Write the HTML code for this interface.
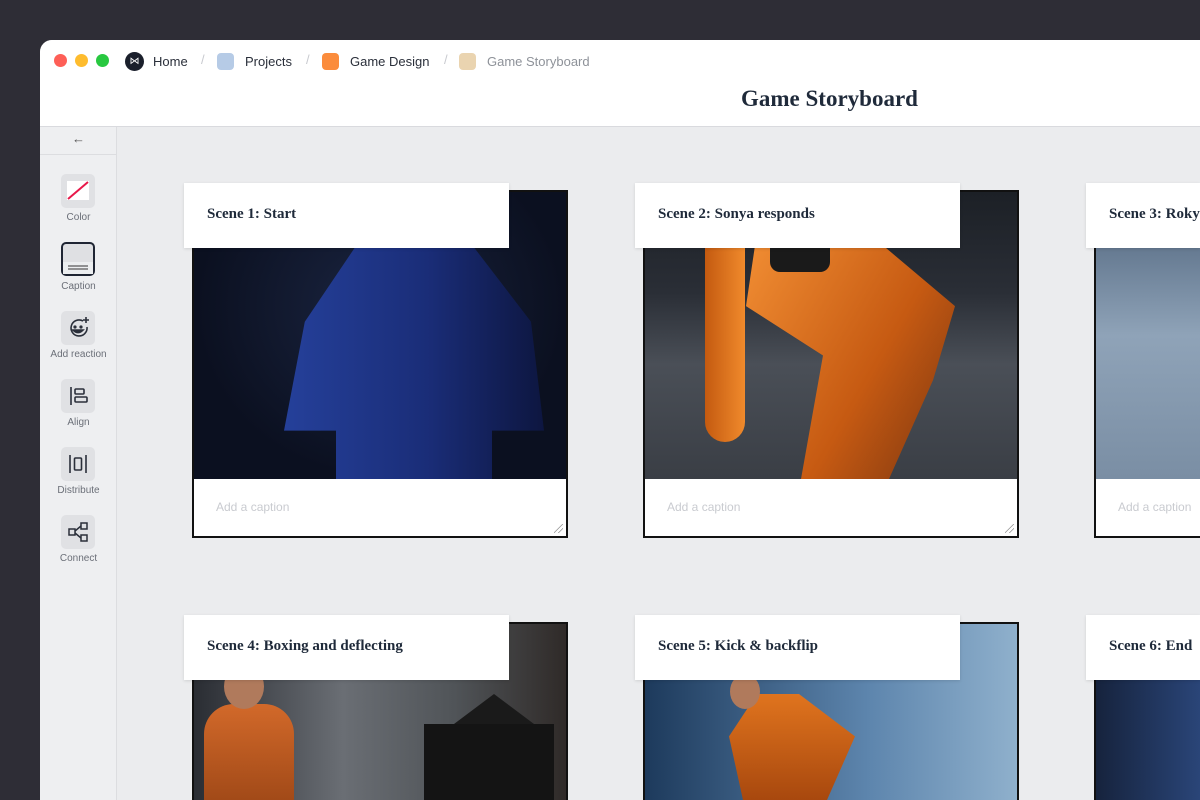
<!DOCTYPE html>
<html style="width:1200px;height:800px;overflow:hidden"><head><meta charset="utf-8"><style>
*{margin:0;padding:0;box-sizing:border-box}
body{width:1200px;height:800px;background:#2e2d36;overflow:hidden;font-family:"Liberation Sans",sans-serif}
#wrap{position:relative;width:1200px;height:800px;overflow:hidden}
.win{position:absolute;left:40px;top:40px;width:1160px;height:760px;background:#ebecee;border-top-left-radius:12px;overflow:hidden}
.hdr{position:absolute;left:0;top:0;right:0;height:87px;background:#fff;border-bottom:1px solid #d9dade}
.dot{position:absolute;top:14px;width:13px;height:13px;border-radius:50%}
.bc{position:absolute;top:12px;font-size:13px;color:#2a2f3a;display:flex;align-items:center;height:18px}
.sq{width:17px;height:17px;border-radius:4px;margin-right:11px;display:inline-block}
.sl{position:absolute;top:12px;color:#c8cacf;font-size:13px}
.title{position:absolute;top:46px;left:701px;font-family:"Liberation Serif",serif;font-weight:bold;font-size:23px;color:#1f2a3a}
.side{position:absolute;left:0;top:87px;width:77px;bottom:0;background:#eeeff1;border-right:1px solid #dcdde0}
.tool{position:absolute;left:21px;width:34px;height:34px;border-radius:5px;background:#e0e1e4}
.tl{position:absolute;width:77px;left:0;text-align:center;font-size:10px;color:#6b6f78}
.lab{position:absolute;width:325px;height:65px;background:#fff;box-shadow:0 1px 3px rgba(0,0,0,.12);font-family:"Liberation Serif",serif;font-weight:bold;font-size:15px;color:#1f2a3a;padding:23px 0 0 23px;z-index:2;white-space:nowrap;overflow:hidden}
.fr{position:absolute;width:376px;height:348px;border:2px solid #111;background:#fff;overflow:hidden}
.ph{position:absolute;left:0;top:0;right:0;height:287px;overflow:hidden}
.cap{position:absolute;left:22px;top:308px;font-size:12px;color:#c9cbd0}
.rs{position:absolute;right:3px;bottom:3px;width:9px;height:9px;background:linear-gradient(135deg,transparent 45%,#999 46%,#999 52%,transparent 53%,transparent 70%,#999 71%,#999 77%,transparent 78%)}
.r2{top:622px;height:178px;border-bottom:none}
.r2 .ph{height:176px}
.edge{width:106px}
.edgel{width:114px}
</style></head><body><div id="wrap">
<div class="win">
 <div class="hdr">
  <div class="dot" style="left:14px;background:#fe5f57"></div>
  <div class="dot" style="left:35px;background:#febc2e"></div>
  <div class="dot" style="left:56px;background:#28c840"></div>
  <div class="bc" style="left:85px"><span style="width:19px;height:19px;border-radius:50%;background:#1a1f2b;margin-right:9px;display:inline-block;color:#fff;font-size:10px;text-align:center;line-height:19px">⋈</span>Home</div>
  <div class="sl" style="left:161px">/</div>
  <div class="bc" style="left:177px"><span class="sq" style="background:#b6cbe6"></span>Projects</div>
  <div class="sl" style="left:266px">/</div>
  <div class="bc" style="left:282px"><span class="sq" style="background:#fb8c3c"></span>Game Design</div>
  <div class="sl" style="left:404px">/</div>
  <div class="bc" style="left:419px;color:#8e9299"><span class="sq" style="background:#ead4b0"></span>Game Storyboard</div>
  <div class="title">Game Storyboard</div>
 </div>
 <div class="side">
  <div style="position:absolute;left:0;top:0;width:77px;height:28px;border-bottom:1px solid #dcdde0;text-align:center;font-size:13px;color:#555;line-height:24px">←</div>
  <div class="tool" style="top:47px"><svg width="34" height="34"><rect x="6" y="7" width="22" height="19" fill="#fff"/><line x1="7" y1="25" x2="27" y2="8" stroke="#e8184a" stroke-width="2"/></svg></div>
  <div class="tl" style="top:85px">Color</div>
  <div class="tool" style="top:115px;background:#dfe0e3;border:2px solid #1f2533"><svg width="30" height="30"><rect x="0" y="18" width="30" height="12" fill="#eceef0"/><line x1="5" y1="22" x2="25" y2="22" stroke="#333" stroke-width="1"/><line x1="5" y1="25" x2="25" y2="25" stroke="#333" stroke-width="1"/></svg></div>
  <div class="tl" style="top:154px">Caption</div>
  <div class="tool" style="top:184px"><svg width="34" height="34" fill="none" stroke="#2a2f3a" stroke-width="1.6"><path d="M22 10a8 8 0 1 0 4 6"/><circle cx="14" cy="16" r=".8" fill="#2a2f3a"/><circle cx="20" cy="16" r=".8" fill="#2a2f3a"/><path d="M12 19q5 5 10 0z" fill="#2a2f3a"/><path d="M25 6v6M22 9h6"/></svg></div>
  <div class="tl" style="top:222px">Add reaction</div>
  <div class="tool" style="top:252px"><svg width="34" height="34" fill="none" stroke="#2a2f3a" stroke-width="1.6"><path d="M10 8v18"/><rect x="14" y="10" width="9" height="5" rx="1"/><rect x="14" y="18" width="12" height="5" rx="1"/></svg></div>
  <div class="tl" style="top:290px">Align</div>
  <div class="tool" style="top:320px"><svg width="34" height="34" fill="none" stroke="#2a2f3a" stroke-width="1.6"><path d="M9 8v18M25 8v18"/><rect x="13.5" y="11" width="7" height="12" rx="1"/></svg></div>
  <div class="tl" style="top:358px">Distribute</div>
  <div class="tool" style="top:388px"><svg width="34" height="34" fill="none" stroke="#2a2f3a" stroke-width="1.5"><rect x="8" y="14" width="6" height="6"/><rect x="20" y="8" width="6" height="6"/><rect x="20" y="20" width="6" height="6"/><path d="M14 16l6-5M14 18l6 5"/></svg></div>
  <div class="tl" style="top:426px">Connect</div>
 </div>
</div>

<div class="fr" style="left:192px;top:190px"><div class="ph" style="background:radial-gradient(ellipse at 50% 40%,#1a2440,#0b1020 70%)">
 <div style="position:absolute;left:152px;top:0;width:120px;height:18px;background:#1f3a9a;border-radius:0 0 60px 60px"></div>
 <div style="position:absolute;left:178px;top:10px;width:30px;height:40px;background:#b58a78;border-radius:8px"></div>
 <div style="position:absolute;left:90px;top:45px;width:260px;height:242px;background:linear-gradient(90deg,#25409a,#1a2d78 55%,#0d1640);clip-path:polygon(30% 0,70% 0,95% 35%,100% 80%,80% 80%,80% 100%,20% 100%,20% 80%,0 80%,8% 35%)"></div>
</div><div class="cap">Add a caption</div><div class="rs"></div></div>
<div class="lab" style="left:184px;top:183px">Scene 1: Start</div>

<div class="fr" style="left:643px;top:190px"><div class="ph" style="background:linear-gradient(180deg,#1c2026 0,#2a2e36 35%,#4a4f57 60%,#3a3e45)">
 <div style="position:absolute;left:60px;top:0;width:40px;height:250px;background:linear-gradient(90deg,#c45a10,#f08a2c);border-radius:20px"></div>
 <div style="position:absolute;left:90px;top:40px;width:220px;height:247px;background:linear-gradient(120deg,#f59236,#c65a12 60%,#7a3510);clip-path:polygon(10% 0,60% 0,100% 30%,90% 60%,70% 100%,30% 100%,40% 50%,5% 30%)"></div>
 <div style="position:absolute;left:125px;top:45px;width:60px;height:35px;background:#1a1a1a;border-radius:10px"></div>
</div><div class="cap">Add a caption</div><div class="rs"></div></div>
<div class="lab" style="left:635px;top:183px">Scene 2: Sonya responds</div>

<div class="fr edge" style="left:1094px;top:190px;border-right:none"><div class="ph" style="background:linear-gradient(180deg,#4a5f78,#8fa3b8 50%,#7a8ea4)"></div><div class="cap">Add a caption</div></div>
<div class="lab edgel" style="left:1086px;top:183px">Scene 3: Roky</div>

<div class="fr r2" style="left:192px"><div class="ph" style="background:linear-gradient(90deg,#2a2d33,#6a6e74 40%,#505458 70%,#2f2a28)">
 <div style="position:absolute;left:10px;top:80px;width:90px;height:96px;background:linear-gradient(#d2692a,#a24a18);border-radius:30px 30px 0 0"></div>
 <div style="position:absolute;left:30px;top:40px;width:40px;height:45px;background:#b07a5c;border-radius:50%"></div>
 <div style="position:absolute;left:260px;top:70px;width:80px;height:30px;background:#1a1a1a;clip-path:polygon(50% 0,100% 100%,0 100%)"></div>
 <div style="position:absolute;left:230px;top:100px;width:130px;height:76px;background:#141414"></div>
</div></div>
<div class="lab" style="left:184px;top:615px">Scene 4: Boxing and deflecting</div>

<div class="fr r2" style="left:643px"><div class="ph" style="background:linear-gradient(90deg,#1d3a5c,#5d85ad 60%,#8fb0cc)">
 <div style="position:absolute;left:70px;top:70px;width:140px;height:106px;background:linear-gradient(#e0741e,#a8480e);clip-path:polygon(30% 0,60% 0,100% 40%,80% 100%,20% 100%,10% 40%)"></div>
 <div style="position:absolute;left:85px;top:50px;width:30px;height:35px;background:#b07a5c;border-radius:50%"></div>
</div></div>
<div class="lab" style="left:635px;top:615px">Scene 5: Kick &amp; backflip</div>

<div class="fr r2 edge" style="left:1094px;border-right:none"><div class="ph" style="background:linear-gradient(90deg,#16233d,#2a4578)"></div></div>
<div class="lab edgel" style="left:1086px;top:615px">Scene 6: End</div>
</div></body></html>
